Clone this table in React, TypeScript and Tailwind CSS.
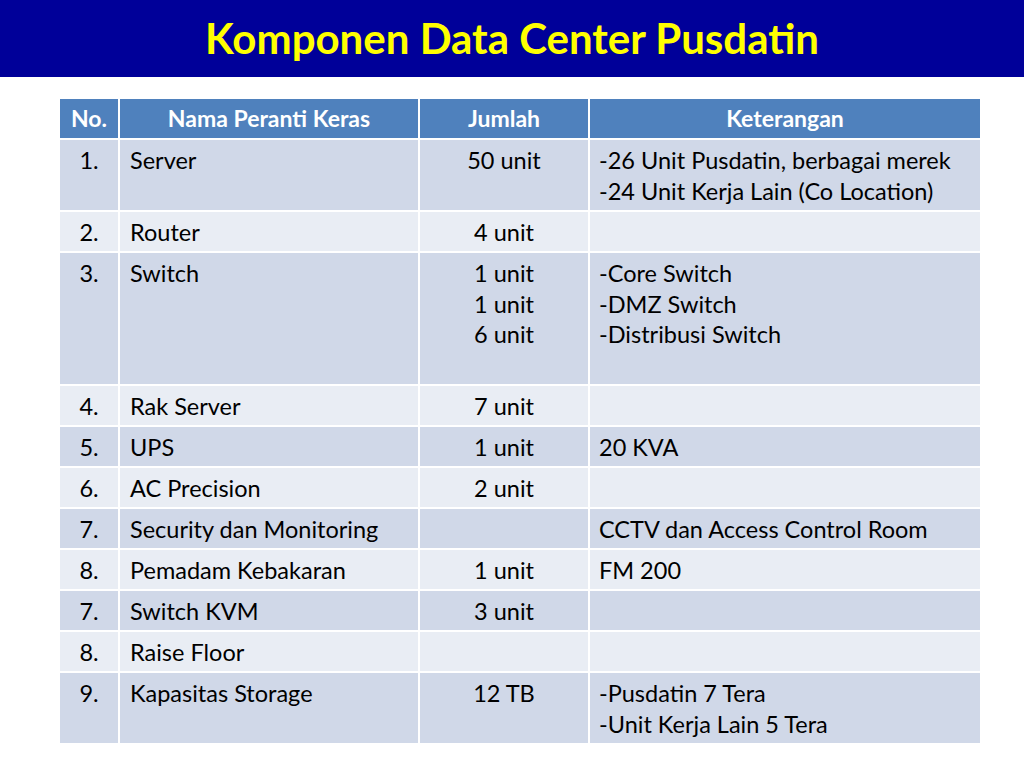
import React from "react";

type Row = {
  no: string;
  name: string;
  qty: string[];
  notes: string[];
  h: string;
};

const rows: Row[] = [
  { no: "1.", name: "Server", qty: ["50 unit"], notes: ["-26 Unit Pusdatin, berbagai merek", "-24 Unit Kerja Lain (Co Location)"], h: "h-[70px]" },
  { no: "2.", name: "Router", qty: ["4 unit"], notes: [], h: "h-[39px]" },
  { no: "3.", name: "Switch", qty: ["1 unit", "1 unit", "6 unit"], notes: ["-Core Switch", "-DMZ Switch", "-Distribusi Switch"], h: "h-[131px]" },
  { no: "4.", name: "Rak Server", qty: ["7 unit"], notes: [], h: "h-[39px]" },
  { no: "5.", name: "UPS", qty: ["1 unit"], notes: ["20 KVA"], h: "h-[39px]" },
  { no: "6.", name: "AC Precision", qty: ["2 unit"], notes: [], h: "h-[39px]" },
  { no: "7.", name: "Security dan Monitoring", qty: [], notes: ["CCTV dan Access Control Room"], h: "h-[39px]" },
  { no: "8.", name: "Pemadam Kebakaran", qty: ["1 unit"], notes: ["FM 200"], h: "h-[39px]" },
  { no: "7.", name: "Switch KVM", qty: ["3 unit"], notes: [], h: "h-[39px]" },
  { no: "8.", name: "Raise Floor", qty: [], notes: [], h: "h-[39px]" },
  { no: "9.", name: "Kapasitas Storage", qty: ["12 TB"], notes: ["-Pusdatin 7 Tera", "-Unit Kerja Lain 5 Tera"], h: "h-[70px]" },
];

const App = () => {
  return (
    <div className="w-[1024px] h-[768px] bg-white font-['Lato',sans-serif] overflow-hidden">
      {/* Title Bar */}
      <div className="h-[77px] bg-[#000099] flex items-center justify-center">
        <h1 className="text-[#ffff00] font-bold text-[42px] leading-none -mt-[2px]">
          Komponen Data Center Pusdatin
        </h1>
      </div>

      {/* Table */}
      <div className="ml-[60px] mt-[22px] w-[920px] grid grid-cols-[58px_298px_168px_390px] gap-[2px] text-[23.5px] leading-[30.5px] text-black">
        <div className="h-[39px] bg-[#4f81bd] text-white font-bold text-[23px] text-center pt-[4px]">No.</div>
        <div className="h-[39px] bg-[#4f81bd] text-white font-bold text-[23px] text-center pt-[4px]">Nama Peranti Keras</div>
        <div className="h-[39px] bg-[#4f81bd] text-white font-bold text-[23px] text-center pt-[4px]">Jumlah</div>
        <div className="h-[39px] bg-[#4f81bd] text-white font-bold text-[23px] text-center pt-[4px]">Keterangan</div>

        {rows.map((r, i) => {
          const bg = i % 2 === 0 ? "bg-[#d0d8e8]" : "bg-[#e9edf4]";
          return (
            <React.Fragment key={i}>
              <div className={`${r.h} ${bg} text-center pt-[5px]`}>{r.no}</div>
              <div className={`${r.h} ${bg} pl-[10px] pt-[5px]`}>{r.name}</div>
              <div className={`${r.h} ${bg} text-center pt-[5px]`}>
                {r.qty.map((q, j) => (
                  <div key={j}>{q}</div>
                ))}
              </div>
              <div className={`${r.h} ${bg} pl-[9px] pt-[5px]`}>
                {r.notes.map((n, j) => (
                  <div key={j}>{n}</div>
                ))}
              </div>
            </React.Fragment>
          );
        })}
      </div>
    </div>
  );
};

export default App;
